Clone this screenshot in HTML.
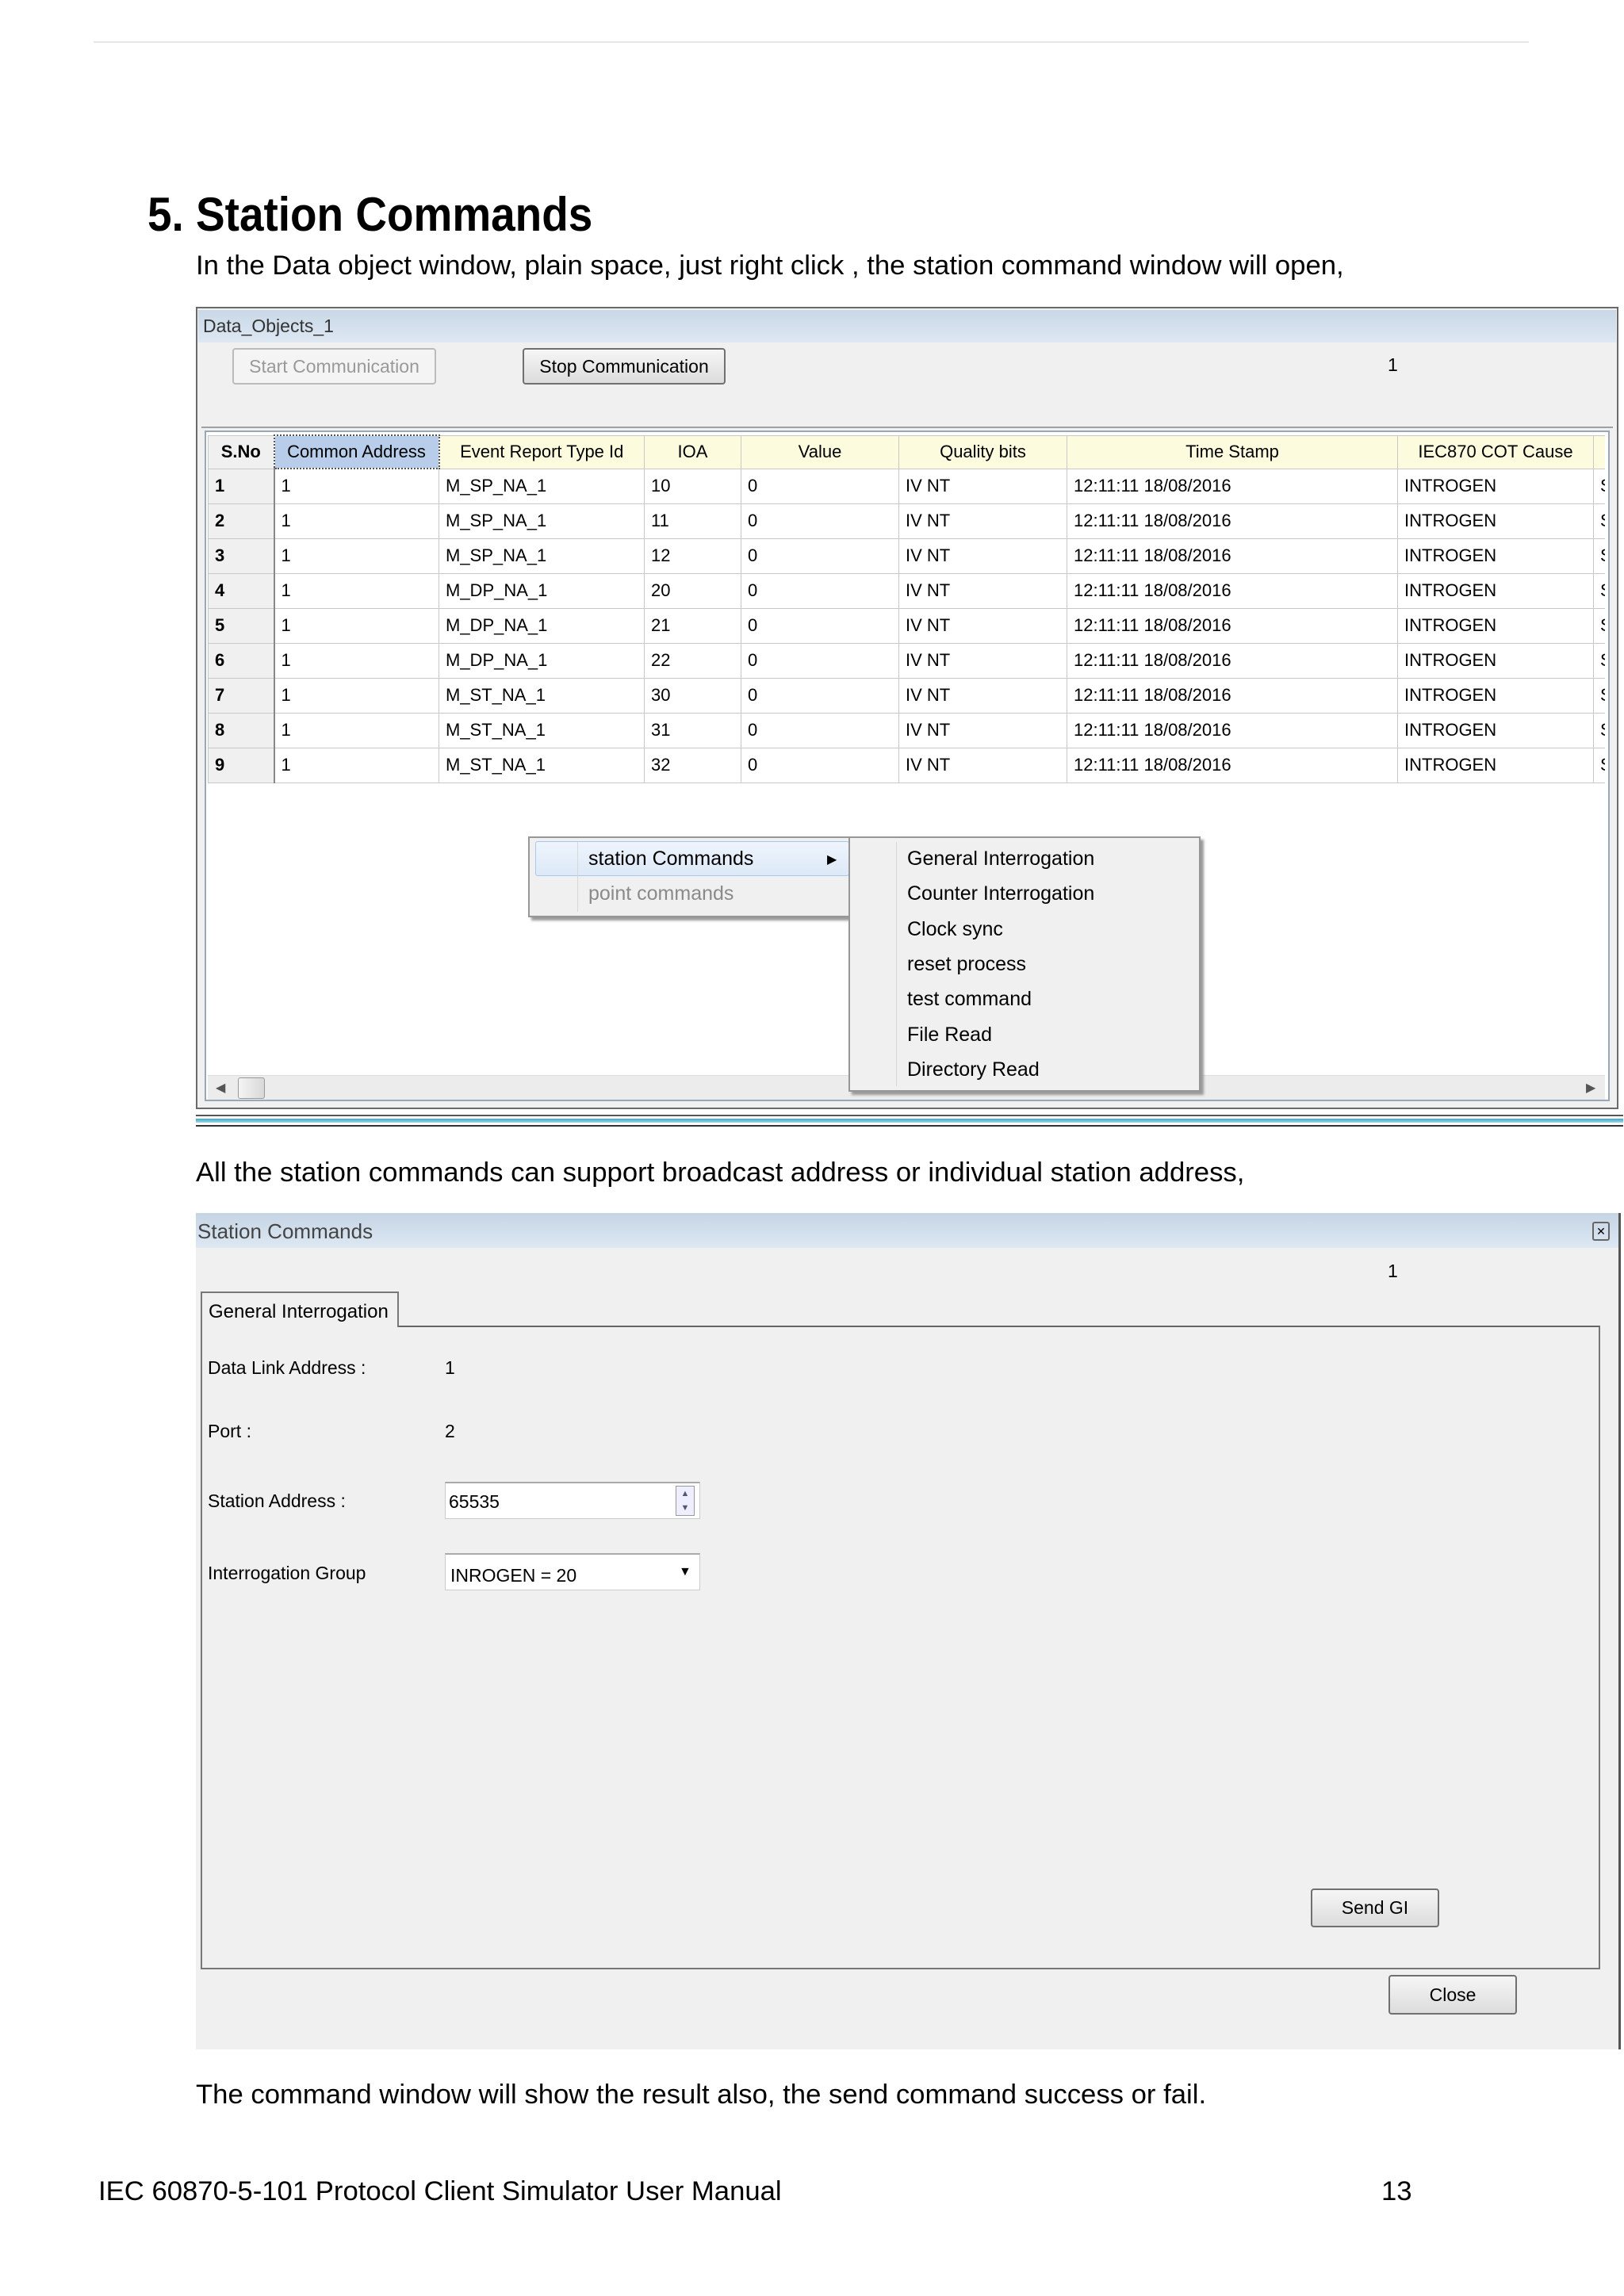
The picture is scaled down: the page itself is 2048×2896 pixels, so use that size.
<!DOCTYPE html>
<html><head><meta charset="utf-8"><style>
*{margin:0;padding:0;box-sizing:border-box}
body{width:2048px;height:2896px;background:#fff;position:relative;overflow:hidden;font-family:"Liberation Sans",sans-serif;color:#000}
.a{position:absolute;white-space:nowrap}
.p{font-size:34px;transform:scaleX(1.02);transform-origin:left top}
.ui{font-size:23px}
table{border-collapse:collapse;table-layout:fixed}
td,th{height:44px;border:1px solid #c8c8c8;font-size:22px;font-weight:normal;text-align:left;padding-left:8px;white-space:nowrap;overflow:hidden;background:#fff}
th{height:42px;background:#fcfbdd;text-align:center;padding:0}
td.n{background:#f0f0f0;font-weight:bold;border-right:2px solid #888}
.btn{position:absolute;border:2px solid #707070;border-radius:4px;background:linear-gradient(#f6f6f6,#dcdcdc);font-size:23px;text-align:center}
.mi{position:absolute;font-size:25px;left:1144px}
</style></head><body>
<div class="a" style="left:118px;top:52px;width:1810px;height:2px;background:#e6e6e6"></div>
<div class="a" style="left:186px;top:236px;font-size:60px;font-weight:bold;transform:scaleX(0.915);transform-origin:left top">5. Station Commands</div>
<div class="a p" style="left:247px;top:316px">In the Data object window, plain space, just right click , the station command window will open,</div>

<!-- screenshot 1 -->
<div class="a" style="left:247px;top:387px;width:1794px;height:1012px;border:2px solid #6a6a6a;background:#f0f0f0"></div>
<div class="a" style="left:250px;top:391px;width:1788px;height:41px;background:linear-gradient(#c9d7e6,#dde8f3)"></div>
<div class="a ui" style="left:256px;top:398px;color:#333">Data_Objects_1</div>
<div class="a" style="left:254px;top:432px;width:1780px;height:108px;background:#f0f0f0;border-bottom:2px solid #a0a0a0"></div>
<div class="btn" style="left:293px;top:439px;width:257px;height:46px;line-height:42px;color:#999;border-color:#bbb;background:#f4f4f4">Start Communication</div>
<div class="btn" style="left:659px;top:439px;width:256px;height:46px;line-height:42px">Stop Communication</div>
<div class="a ui" style="left:1750px;top:447px">1</div>
<div class="a" style="left:258px;top:543px;width:1772px;height:846px;background:#fff;border:2px solid #9aa7b5"></div>
<div class="a" style="left:262px;top:548px;width:1762px;overflow:hidden">
<table style="width:1780px">
<colgroup><col style="width:83px"><col style="width:208px"><col style="width:259px"><col style="width:122px"><col style="width:199px"><col style="width:212px"><col style="width:417px"><col style="width:247px"><col style="width:33px"></colgroup>
<tr><th style="font-weight:bold;background:#f0f0f0">S.No</th><th style="background:#b8cde9;border:2px dotted #555">Common Address</th><th>Event Report Type Id</th><th>IOA</th><th>Value</th><th>Quality bits</th><th>Time Stamp</th><th>IEC870 COT Cause</th><th></th></tr>
<tr><td class="n">1</td><td>1</td><td>M_SP_NA_1</td><td>10</td><td>0</td><td>IV NT</td><td>12:11:11 18/08/2016</td><td>INTROGEN</td><td>S</td></tr>
<tr><td class="n">2</td><td>1</td><td>M_SP_NA_1</td><td>11</td><td>0</td><td>IV NT</td><td>12:11:11 18/08/2016</td><td>INTROGEN</td><td>S</td></tr>
<tr><td class="n">3</td><td>1</td><td>M_SP_NA_1</td><td>12</td><td>0</td><td>IV NT</td><td>12:11:11 18/08/2016</td><td>INTROGEN</td><td>S</td></tr>
<tr><td class="n">4</td><td>1</td><td>M_DP_NA_1</td><td>20</td><td>0</td><td>IV NT</td><td>12:11:11 18/08/2016</td><td>INTROGEN</td><td>S</td></tr>
<tr><td class="n">5</td><td>1</td><td>M_DP_NA_1</td><td>21</td><td>0</td><td>IV NT</td><td>12:11:11 18/08/2016</td><td>INTROGEN</td><td>S</td></tr>
<tr><td class="n">6</td><td>1</td><td>M_DP_NA_1</td><td>22</td><td>0</td><td>IV NT</td><td>12:11:11 18/08/2016</td><td>INTROGEN</td><td>S</td></tr>
<tr><td class="n">7</td><td>1</td><td>M_ST_NA_1</td><td>30</td><td>0</td><td>IV NT</td><td>12:11:11 18/08/2016</td><td>INTROGEN</td><td>S</td></tr>
<tr><td class="n">8</td><td>1</td><td>M_ST_NA_1</td><td>31</td><td>0</td><td>IV NT</td><td>12:11:11 18/08/2016</td><td>INTROGEN</td><td>S</td></tr>
<tr><td class="n">9</td><td>1</td><td>M_ST_NA_1</td><td>32</td><td>0</td><td>IV NT</td><td>12:11:11 18/08/2016</td><td>INTROGEN</td><td>S</td></tr>
</table></div>
<!-- scrollbar -->
<div class="a" style="left:262px;top:1356px;width:1762px;height:31px;background:#ececec;border-top:1px solid #ddd"></div>
<div class="a" style="left:272px;top:1362px;font-size:16px;color:#555">&#9664;</div>
<div class="a" style="left:300px;top:1359px;width:34px;height:27px;border:1px solid #999;border-radius:3px;background:linear-gradient(90deg,#f4f4f4,#d8d8d8)"></div>
<div class="a" style="left:2000px;top:1362px;font-size:16px;color:#555">&#9654;</div>
<div class="a" style="left:247px;top:1406px;width:1800px;height:2px;background:#555"></div>
<div class="a" style="left:247px;top:1411px;width:1800px;height:5px;background:linear-gradient(#3aa8c8,#9fd8e8)"></div>
<div class="a" style="left:247px;top:1419px;width:1800px;height:2px;background:#333"></div>
<!-- context menu -->
<div class="a" style="left:666px;top:1055px;width:406px;height:102px;background:#f0f0f0;border:2px solid #979797;box-shadow:4px 4px 3px #999"></div>
<div class="a" style="left:675px;top:1061px;width:396px;height:44px;border:1px solid #a8c8ee;border-radius:3px;background:linear-gradient(#eef4fc,#dde9f8)"></div>
<div class="a" style="left:728px;top:1062px;width:1px;height:88px;background:#d8d8d8"></div>
<div class="a" style="left:742px;top:1069px;font-size:25px">station Commands</div>
<div class="a" style="left:1043px;top:1074px;font-size:16px">&#9654;</div>
<div class="a" style="left:742px;top:1113px;font-size:25px;color:#8a8a8a">point commands</div>
<div class="a" style="left:1070px;top:1055px;width:444px;height:322px;background:#f0f0f0;border:2px solid #979797;box-shadow:4px 4px 3px #999"></div>
<div class="a" style="left:1130px;top:1062px;width:1px;height:308px;background:#d8d8d8"></div>
<div class="mi" style="top:1069px">General Interrogation</div>
<div class="mi" style="top:1113px">Counter Interrogation</div>
<div class="mi" style="top:1158px">Clock sync</div>
<div class="mi" style="top:1202px">reset process</div>
<div class="mi" style="top:1246px">test command</div>
<div class="mi" style="top:1291px">File Read</div>
<div class="mi" style="top:1335px">Directory Read</div>

<div class="a p" style="left:247px;top:1460px">All the station commands can support broadcast address or individual station address,</div>

<!-- screenshot 2 -->
<div class="a" style="left:247px;top:1530px;width:1797px;height:1055px;background:#f0f0f0;border-right:3px solid #555"></div>
<div class="a" style="left:247px;top:1530px;width:1794px;height:44px;background:linear-gradient(#c5d4e4,#dde8f3)"></div>
<div class="a ui" style="left:249px;top:1538px;font-size:26px;color:#444">Station Commands</div>
<div class="a" style="left:2008px;top:1541px;width:22px;height:24px;border:2px solid #666;border-radius:3px;font-size:14px;text-align:center;line-height:20px">&#10005;</div>
<div class="a ui" style="left:1750px;top:1590px">1</div>
<div class="a" style="left:253px;top:1672px;width:1765px;height:812px;border:2px solid #777;border-top:2px solid #666"></div>
<div class="a" style="left:253px;top:1629px;width:250px;height:45px;border:2px solid #777;border-bottom:none;background:#f0f0f0;font-size:24px;padding:10px 0 0 8px">General Interrogation</div>
<div class="a ui" style="left:262px;top:1712px">Data Link Address :</div>
<div class="a ui" style="left:561px;top:1712px">1</div>
<div class="a ui" style="left:262px;top:1792px">Port :</div>
<div class="a ui" style="left:561px;top:1792px">2</div>
<div class="a ui" style="left:262px;top:1880px">Station Address :</div>
<div class="a" style="left:561px;top:1869px;width:322px;height:47px;background:#fff;border:1px solid #ccc;border-top:2px solid #aaa"></div>
<div class="a ui" style="left:566px;top:1881px">65535</div>
<div class="a" style="left:852px;top:1874px;width:24px;height:38px;border:1px solid #999;background:#eef;font-size:11px;color:#557;text-align:center;line-height:18px">&#9650;<br>&#9660;</div>
<div class="a ui" style="left:262px;top:1971px">Interrogation Group</div>
<div class="a" style="left:561px;top:1959px;width:322px;height:47px;background:#fff;border:1px solid #ccc;border-top:2px solid #aaa"></div>
<div class="a ui" style="left:568px;top:1974px">INROGEN = 20</div>
<div class="a" style="left:856px;top:1974px;font-size:16px">&#9660;</div>
<div class="btn" style="left:1653px;top:2382px;width:162px;height:49px;line-height:45px">Send GI</div>
<div class="btn" style="left:1751px;top:2491px;width:162px;height:50px;line-height:46px">Close</div>

<div class="a p" style="left:247px;top:2623px">The command window will show the result also, the send command success or fail.</div>
<div class="a p" style="left:124px;top:2745px">IEC 60870-5-101 Protocol Client Simulator User Manual</div>
<div class="a p" style="left:1742px;top:2745px">13</div>
</body></html>
